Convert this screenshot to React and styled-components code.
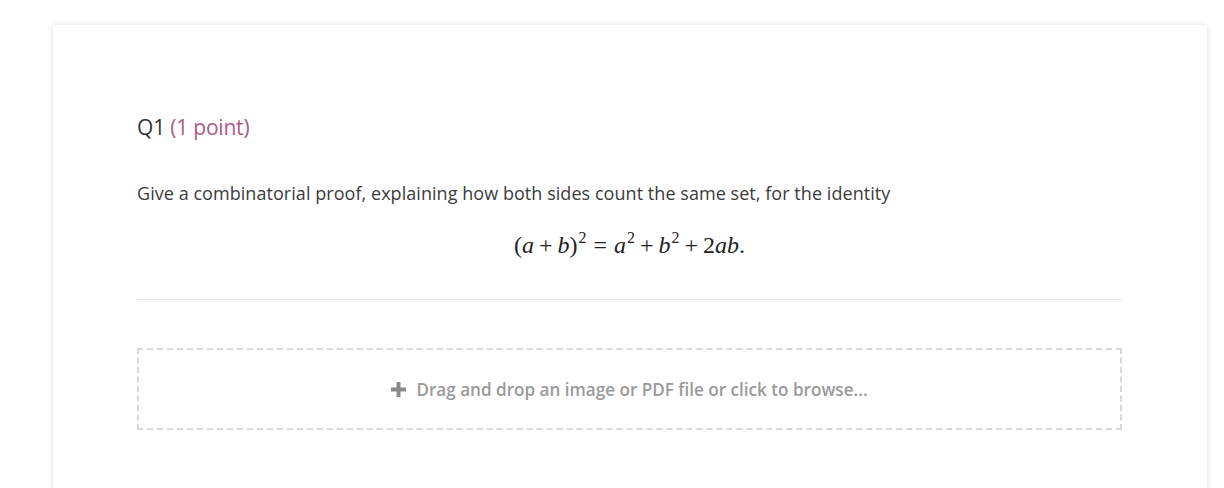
import React from 'react';
import styled, { createGlobalStyle } from 'styled-components';

const GlobalStyle = createGlobalStyle`
  html, body {
    margin: 0;
    padding: 0;
    background: #ffffff;
    font-family: "Open Sans", "Liberation Sans", sans-serif;
    overflow: hidden;
  }
`;

const Page = styled.div`
  height: 488px;
  padding: 25px 17px 0 53px;
  box-sizing: border-box;
`;

const Card = styled.div`
  width: 1154px;
  height: 520px;
  background: #fff;
  box-shadow: 0 0 7px rgba(0, 0, 0, 0.11), 0 1px 3px rgba(0, 0, 0, 0.05);
  padding: 87px 85px 0 84px;
  box-sizing: border-box;
`;

const Title = styled.h2`
  margin: 0;
  font-size: 21px;
  font-weight: 500;
  color: #333;
  line-height: 30px;
  letter-spacing: -0.2px;
`;

const Points = styled.span`
  font-weight: 400;
  color: #b0588a;
`;

const Prompt = styled.p`
  margin: 38px 0 0;
  font-size: 18px;
  color: #3c3c3c;
  line-height: 26px;
  letter-spacing: 0.05px;
`;

const Formula = styled.div`
  margin: 22px 0 0;
  text-align: center;
  font-family: "Liberation Serif", "DejaVu Serif", serif;
  font-size: 24px;
  color: #222;
  line-height: 34px;
  white-space: nowrap;
`;

const V = styled.i`
  font-style: italic;
`;

const Op = styled.span`
  margin: 0 ${(p) => p.gap || 5}px;
`;

const Sup = styled.sup`
  font-size: 16px;
  vertical-align: 10px;
  line-height: 0;
  margin-left: 1px;
`;

const Rule = styled.hr`
  margin: 37px 0 0;
  border: 0;
  border-top: 1px solid #e3e3e3;
`;

const Drop = styled.div`
  margin-top: 48px;
  height: 82px;
  border: 2px dashed #d9d9d9;
  box-sizing: border-box;
  display: flex;
  align-items: center;
  justify-content: center;
  gap: 10px;
  color: #9a9a9a;
  font-size: 17.1px;
  font-weight: 600;
  cursor: pointer;
`;

const Plus = () => (
  <svg width="15" height="15" viewBox="0 0 15 15">
    <path d="M5.5 0h4v5.5H15v4H9.5V15h-4V9.5H0v-4h5.5z" fill="#8a8a8a" />
  </svg>
);

export default function App() {
  return (
    <>
      <GlobalStyle />
      <Page>
        <Card>
          <Title>
            Q1 <Points>(1 point)</Points>
          </Title>
          <Prompt>
            Give a combinatorial proof, explaining how both sides count the same set, for the identity
          </Prompt>
          <Formula>
            (<V>a</V>
            <Op>+</Op>
            <V>b</V>)<Sup>2</Sup>
            <Op gap={7}>=</Op>
            <V>a</V>
            <Sup>2</Sup>
            <Op>+</Op>
            <V>b</V>
            <Sup>2</Sup>
            <Op>+</Op>
            2<V>ab</V>.
          </Formula>
          <Rule />
          <Drop>
            <Plus />
            Drag and drop an image or PDF file or click to browse...
          </Drop>
        </Card>
      </Page>
    </>
  );
}
